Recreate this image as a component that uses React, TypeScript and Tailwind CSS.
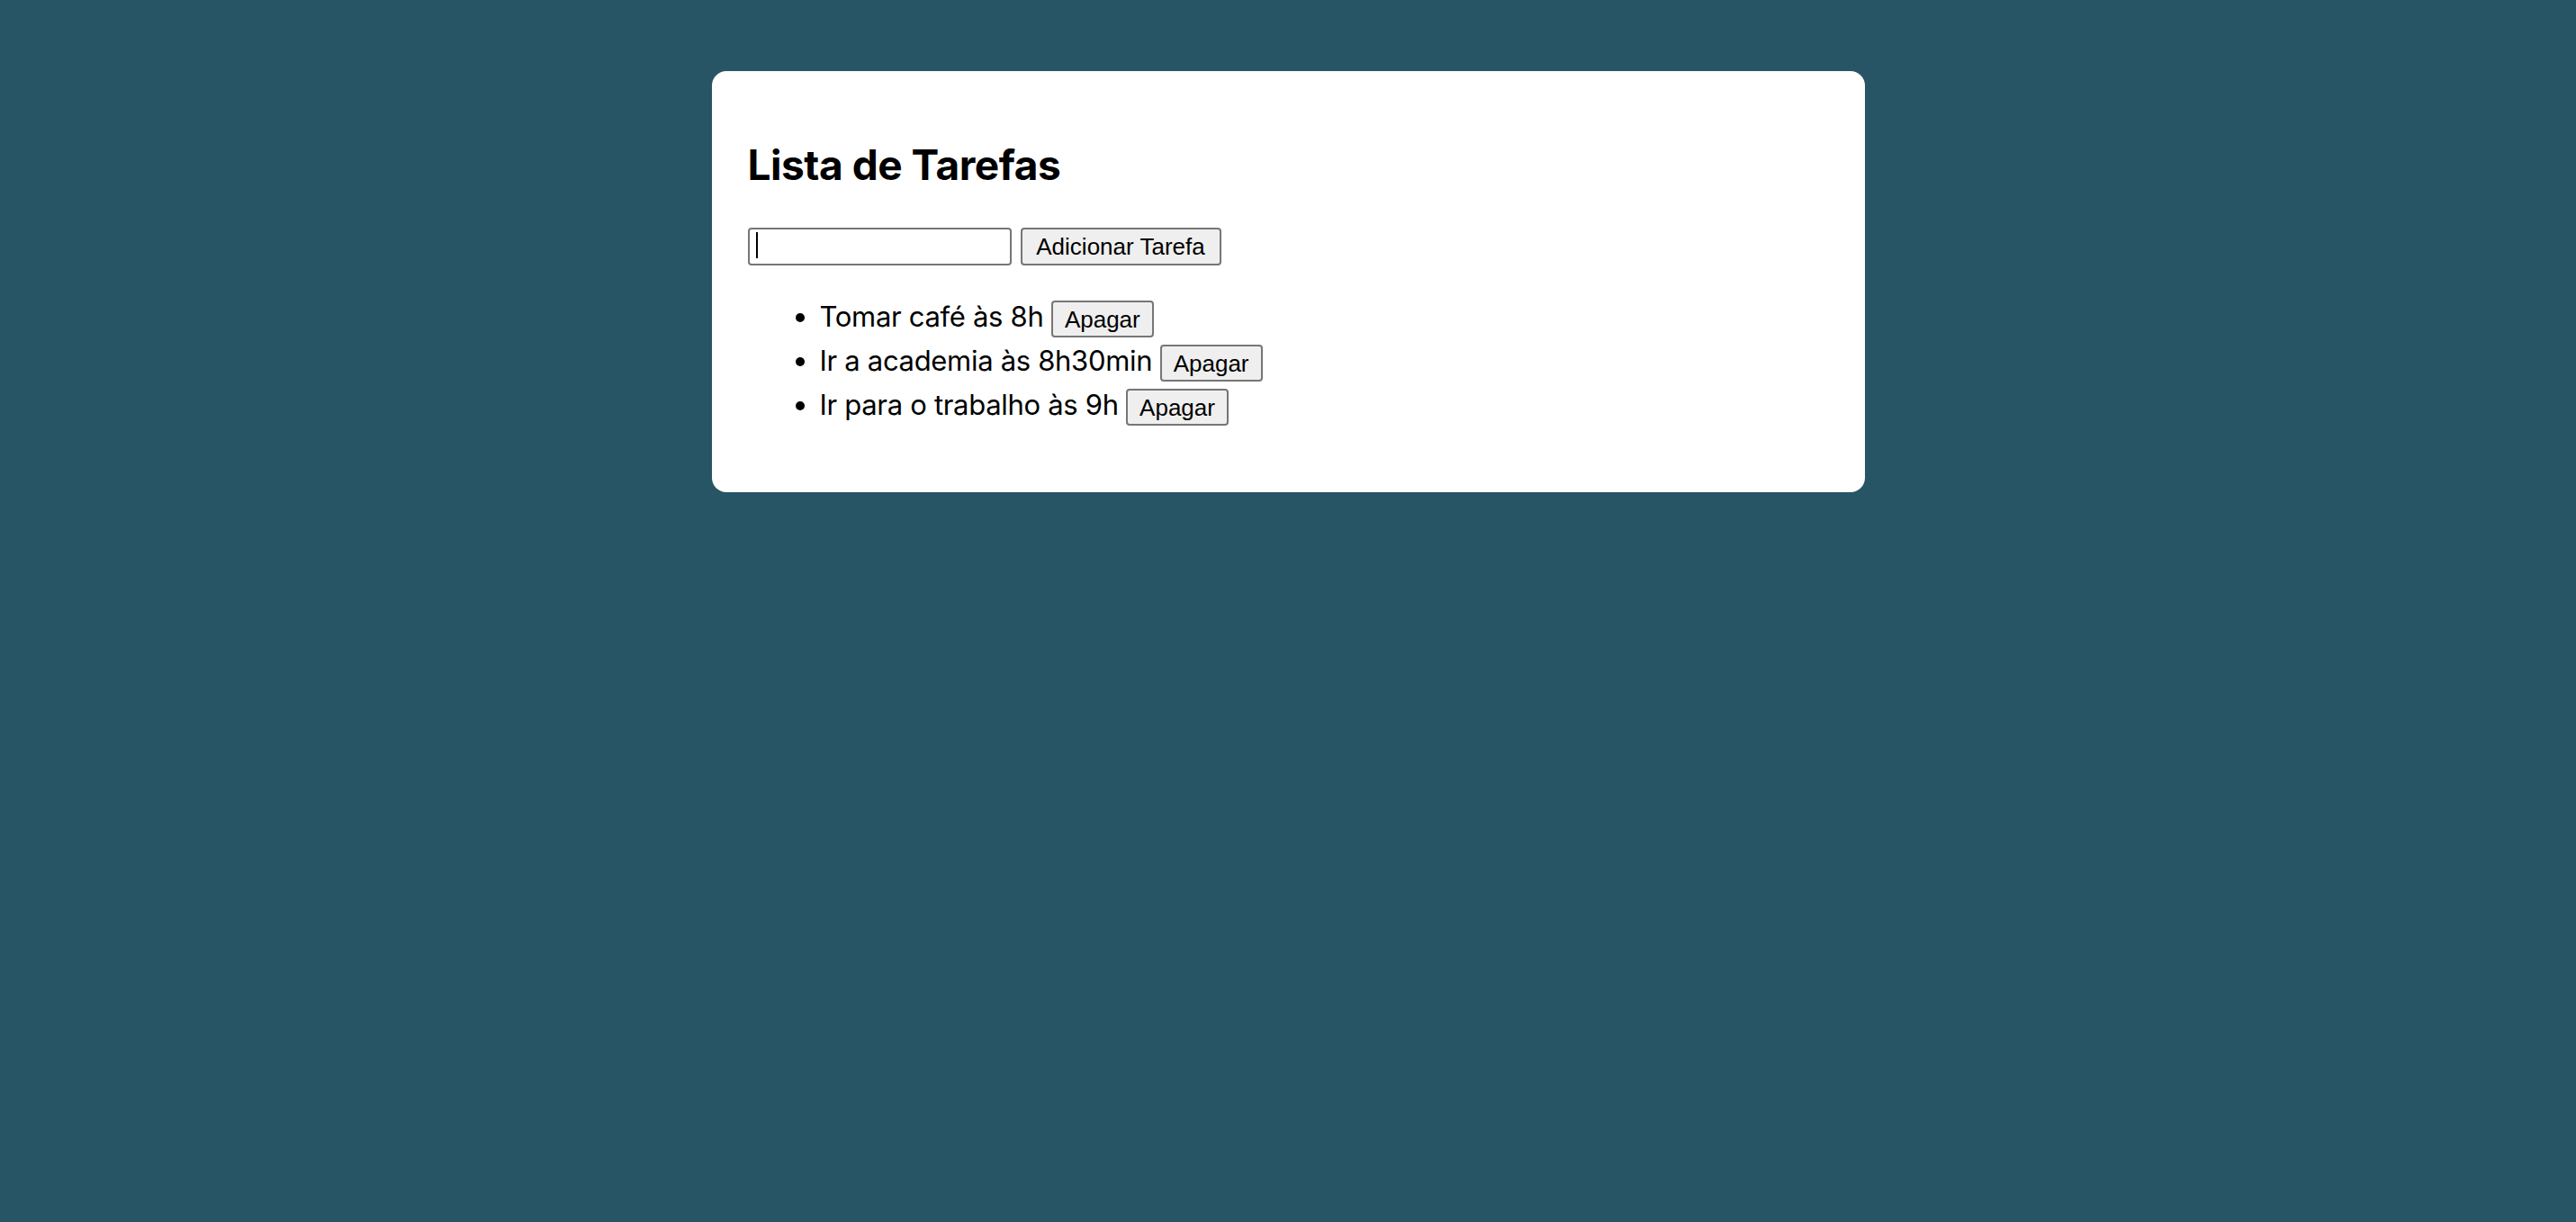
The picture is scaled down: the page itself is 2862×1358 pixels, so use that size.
import { useState } from "react";

const inter = "font-['Inter','Noto_Sans',sans-serif]";
const arial = "font-['Liberation_Sans',Arial,sans-serif]";

export default function App() {
    const [tasks] = useState([
        "Tomar café às 8h",
        "Ir a academia às 8h30min",
        "Ir para o trabalho às 9h",
    ]);

    return (
        <div className="min-h-screen bg-[#275565] pt-[79px]">
            <div className={`mx-auto w-[1281px] rounded-[16px] bg-white px-[40px] pt-[40px] pb-[40px] text-black ${inter}`}>
                <h1 className="mt-[41px] text-[46px] leading-none font-bold tracking-[-0.01em]">Lista de Tarefas</h1>

                {/* input + add button */}
                <div className="mt-[47px] flex items-center gap-[10px]">
                    <div className="relative">
                        <input
                            type="text"
                            className="block h-[42px] w-[293px] rounded-[4px] border-2 border-[#767676] bg-white caret-transparent outline-none"
                        />
                        <span className="pointer-events-none absolute top-[5px] left-[9px] h-[29px] w-[2px] bg-black" />
                    </div>
                    <button className={`flex h-[42px] w-[223px] items-center justify-center rounded-[4px] border-2 border-[#767676] bg-[#efefef] text-[26px] leading-none ${arial}`}>
                        Adicionar Tarefa
                    </button>
                </div>

                {/* tasks */}
                <ul className="mt-[32px] mb-[33px] list-disc pl-[80px] text-[31px] leading-[49px] tracking-[-0.01em]">
                    {tasks.map((t) => (
                        <li key={t}>
                            {t}{" "}
                            <button className={`inline-flex h-[41px] items-center rounded-[4px] border-2 border-[#767676] bg-[#efefef] px-[13px] align-middle text-[26px] leading-none tracking-normal ${arial}`}>
                                Apagar
                            </button>
                        </li>
                    ))}
                </ul>
            </div>
        </div>
    );
}
